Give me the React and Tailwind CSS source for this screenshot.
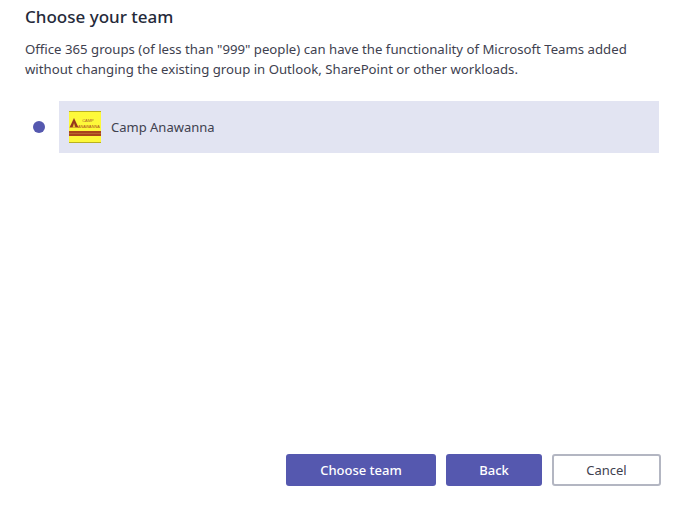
import React from "react";

const Logo = () => (
  <svg width="32" height="32" viewBox="0 0 32 32" className="shrink-0">
    <rect width="32" height="32" fill="#fdf93a" />
    <rect width="32" height="1" fill="#b9b020" />
    <rect y="31" width="32" height="1" fill="#b9b020" />
    <rect y="20" width="32" height="5" fill="#a8441c" />
    <rect y="22" width="32" height="1" fill="#b8682a" />
    <path d="M5 7 L9.5 16.5 L0.5 16.5 Z" fill="#96381c" />
    <path d="M5 12 L6.5 16.5 L3.5 16.5 Z" fill="#e8c830" />
    <text x="19" y="11" fontSize="4" textAnchor="middle" fill="#a8602c" fontFamily="Liberation Sans, sans-serif">CAMP</text>
    <text x="9" y="16.5" fontSize="3.8" fill="#a8481c" fontFamily="Liberation Sans, sans-serif">ANAWANNA</text>
  </svg>
);

const App = () => {
  return (
    <div className="w-[677px] h-[507px] bg-white flex flex-col overflow-hidden font-['Noto_Sans',sans-serif]">
      {/* Header */}
      <div className="pl-[25px] pr-4 pt-[5px]">
        <h1 className="text-[17px] leading-6 font-medium text-[#252a3a]">Choose your team</h1>
        <p className="mt-[10px] text-[13.2px] leading-5 text-[#40414f] whitespace-nowrap">
          Office 365 groups (of less than "999" people) can have the functionality of Microsoft Teams added
          <br />
          without changing the existing group in Outlook, SharePoint or other workloads.
        </p>
      </div>

      {/* Team list */}
      <div className="flex items-center mt-[22px] pl-[33px] pr-[18px]">
        <div className="w-[12px] h-[12px] rounded-full bg-[#5558af] mr-[14px]" />
        <div className="flex-1 h-[52px] bg-[#e2e4f2] flex items-center pl-[10px]">
          <Logo />
          <span className="ml-[10px] pt-[2px] text-[13px] text-[#40414f]">Camp Anawanna</span>
        </div>
      </div>

      {/* Footer buttons */}
      <div className="mt-auto mb-[21px] flex justify-end gap-[10px] pr-[16px]">
        <button className="w-[150px] h-[32px] pt-[2px] rounded-[3px] bg-[#5558af] text-white text-[13px] font-medium">Choose team</button>
        <button className="w-[96px] h-[32px] pt-[2px] rounded-[3px] bg-[#5558af] text-white text-[13px] font-medium">Back</button>
        <button className="w-[109px] h-[32px] pt-[2px] rounded-[3px] bg-white border-2 border-[#b3b6c2] text-[#40414f] text-[13px]">Cancel</button>
      </div>
    </div>
  );
};

export default App;
